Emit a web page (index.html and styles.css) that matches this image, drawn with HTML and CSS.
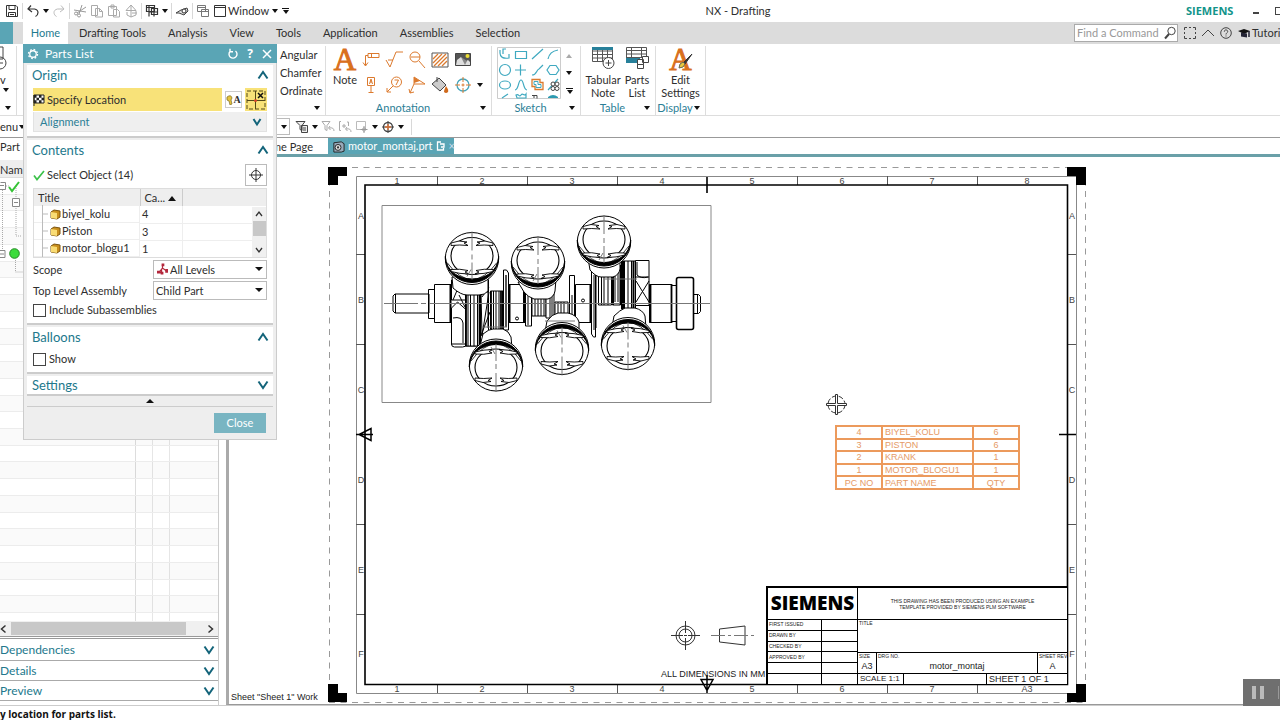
FILE: index.html
```html
<!DOCTYPE html>
<html lang="en">
<head>
<meta charset="utf-8">
<title>NX - Drafting</title>
<link rel="stylesheet" href="styles.css">
</head>
<body>
<div class="app">
  <header class="titlebar">
    <div class="quick">
      <button class="qa" aria-label="Save"><svg viewBox="0 0 14 14"><path d="M1.500 1.500h9.500l1.500 1.500v9.500h-11zM4 1.500v4h6v-4M3.500 12.500v-4h7v4M5 10.500h4" fill="none" stroke="#333"/></svg></button>
      <i class="vsep"></i>
      <button class="qa" aria-label="Undo"><svg viewBox="0 0 14 14"><path d="M5 1.500L2 5l4 3M2.500 5h6c5 1 4 6 1 7.500" fill="none" stroke="#333" stroke-width="1.200"/></svg></button>
      <i class="caret"></i>
      <button class="qa" aria-label="Redo"><svg viewBox="0 0 14 14"><path d="M9 1.500L12 5l-4 3M11.500 5h-6c-5 1-4 6-1 7.500" fill="none" stroke="#bbb"/></svg></button>
      <i class="vsep"></i>
      <button class="qa" aria-label="Cut"><svg viewBox="0 0 14 14"><path d="M13 3L4 9M9 1L6 10M1 6l12 2" fill="none" stroke="#999"/><circle cx="3" cy="9.500" r="1.500" fill="none" stroke="#999"/><circle cx="6" cy="11.500" r="1.500" fill="none" stroke="#999"/></svg></button>
      <button class="qa" aria-label="Copy"><svg viewBox="0 0 14 14"><path d="M1.500 1.500h6v10h-6zM5.500 4.500h4l3 3v5.500h-7zM9.500 4.500v3h3" fill="#fff" stroke="#aaa"/></svg></button>
      <button class="qa" aria-label="Paste"><svg viewBox="0 0 14 14"><path d="M1.500 2.500h8v9h-8zM4 1h3v3h-3zM6.500 5.500h4l2 2v5.500h-6z" fill="#fff" stroke="#aaa"/></svg></button>
      <button class="qa" aria-label="Repeat"><svg viewBox="0 0 14 14"><path d="M2 6.500L7 1l5 5.500H2M7 1v12M3 8v3l4 2 5-2V7M8 9h5" fill="none" stroke="#aaa"/></svg></button>
      <i class="vsep"></i>
      <button class="qa" aria-label="Touch mode"><svg viewBox="0 0 14 14"><path d="M1.500 1.500h8v6h-8zM1.500 3.500h8M4 1.500v11M6.500 4.500h6v6h-6zM9 4.500v8M4 8h8" fill="none" stroke="#333" stroke-width="1.200"/></svg></button>
      <i class="caret"></i>
      <i class="vsep"></i>
      <button class="qa" aria-label="Command finder"><svg viewBox="0 0 14 14"><path d="M1 9l5-3 6-2 1 3-4 4-5-2z" fill="#ddd" stroke="#444"/><circle cx="9" cy="7" r="2" fill="#fff" stroke="#333"/></svg></button>
      <i class="vsep"></i>
      <button class="qa" aria-label="Cascade"><svg viewBox="0 0 14 14"><path d="M1.500 1.500h8v6h-8zM1.500 3.500h8M5.500 5.500h7v7h-7zM5.500 7.500h7" fill="#fff" stroke="#777"/></svg></button>
      <button class="window-menu"><svg viewBox="0 0 14 14"><path d="M1.500 1.500h11v11h-11zM1.500 3.500h11" fill="#fff" stroke="#333"/></svg>Window <i class="caret"></i></button>
      <i class="caret barred"></i>
    </div>
    <h1 class="title">NX - Drafting</h1>
    <div class="winctl"><b class="brand">SIEMENS</b><button class="min" aria-label="Minimize"></button><button class="restore" aria-label="Restore"></button></div>
  </header>

  <nav class="tabs">
    <button class="filetab" aria-label="File"></button>
    <button class="tab active">Home</button>
    <button class="tab">Drafting Tools</button>
    <button class="tab">Analysis</button>
    <button class="tab">View</button>
    <button class="tab">Tools</button>
    <button class="tab">Application</button>
    <button class="tab">Assemblies</button>
    <button class="tab">Selection</button>
    <div class="tabs-right">
      <label class="find"><input type="text" placeholder="Find a Command" aria-label="Find a Command"><svg viewBox="0 0 14 14"><circle cx="8.500" cy="5" r="3.700" fill="none" stroke="#444"/><path d="M6 8L2 12.500" stroke="#444" stroke-width="2"/></svg></label>
      <button class="ti" aria-label="Full screen"><svg viewBox="0 0 14 14"><path d="M1.500 4V1.500H4M10 1.500h2.500V4M12.500 10v2.500H10M4 12.500H1.500V10M6 1.500h2M6 12.500h2M1.500 6v2M12.500 6v2" fill="none" stroke="#444"/></svg></button>
      <button class="ti" aria-label="Minimize ribbon"><svg viewBox="0 0 14 14"><path d="M1 10l6-6 6 6" fill="none" stroke="#444"/></svg></button>
      <button class="ti" aria-label="Help"><svg viewBox="0 0 14 14"><circle cx="7" cy="7" r="5.300" fill="none" stroke="#444"/><path d="M5.300 5.700c0-2.600 3.600-2.200 3.400 0C8.500 7 7 7 7 8.500M7 9.500v1" fill="none" stroke="#444"/></svg></button>
      <button class="tutorial"><svg viewBox="0 0 14 14"><path d="M1 5l6-2 6 2-6 3z" fill="#111"/><path d="M4 6.500v4l6 1v-4z" fill="#223"/><path d="M12 5v6" stroke="#223" stroke-width="1.500"/></svg>Tutorials</button>
    </div>
  </nav>

  <section class="ribbon">
    <div class="group g-view">
      <div class="gbody view-body"><svg class="half" viewBox="0 0 8 26"><path d="M0 1h3v12H0M0 11a4 4 0 0 1 0 12M0 17h3" fill="none" stroke="#444"/></svg><span>v</span><i class="caret"></i></div>
      <div class="glabel"><span></span><i class="caret"></i></div>
    </div>
    <div class="group g-dim">
      <div class="gbody dim-body"><button>Angular</button><button>Chamfer</button><button>Ordinate</button></div>
      <div class="glabel"><span></span><i class="caret"></i></div>
    </div>
    <div class="group g-ann">
      <div class="gbody ann-body">
        <button class="big"><span class="bigA">A</span>Note</button>
        <div class="anngrid">
          <button aria-label="Feature control frame"><svg viewBox="0 0 18 18"><path d="M6 2.500h11v4H6zM9.500 2.500v4M6 4.500H3.500v10M1 11.500l2.500 3.500L6 11.500" fill="none" stroke="#dc7a2e"/></svg></button>
          <button aria-label="Surface finish"><svg viewBox="0 0 18 18"><path d="M1 9l4 7 6-15h7M3 9h5" fill="none" stroke="#dc7a2e"/></svg></button>
          <button aria-label="Balloon zoom"><svg viewBox="0 0 18 18"><circle cx="7" cy="6" r="5" fill="none" stroke="#dc7a2e"/><path d="M3 6h9M11 10l6 7" fill="none" stroke="#dc7a2e"/></svg></button>
          <button aria-label="Crosshatch"><svg viewBox="0 0 18 18"><path d="M1 2h16v14H1z" fill="#fff" stroke="#555"/><path d="M2 8l5-5M2 12l9-9M3 15L15 3M7 15l9-9M11 15l5-5" stroke="#dc7a2e" stroke-width="1.300"/></svg></button>
          <button aria-label="Image"><svg viewBox="0 0 18 18"><path d="M1.500 2.500h15v12h-15z" fill="#555" stroke="#444"/><path d="M2 14l1-5 4-3 4 5 3-2 2 2v3z" fill="#ddd"/><path d="M7 6l4 8 2-4" fill="#888"/><circle cx="13.500" cy="5" r="2" fill="#eddf36"/></svg></button>
          <button aria-label="Datum feature"><svg viewBox="0 0 18 18"><path d="M5.500 1.500h7v8h-7zM9 9.500v7M6.500 16.500h5M7.500 8L9 3l1.500 5M8 6h2" fill="none" stroke="#dc7a2e"/></svg></button>
          <button aria-label="Balloon"><svg viewBox="0 0 18 18"><circle cx="11.500" cy="6" r="5" fill="none" stroke="#dc7a2e"/><path d="M8 10l-6 6M2 12v4h4M9.500 4h4L11 9" fill="none" stroke="#dc7a2e"/></svg></button>
          <button aria-label="Weld symbol"><svg viewBox="0 0 18 18"><path d="M6 1v7l-4 9M1 13l1 4 4-1M6 8h11M6 1l11 7" fill="none" stroke="#dc7a2e"/><path d="M6 1l6 4-6 2z" fill="#dc7a2e"/></svg></button>
          <button aria-label="Area fill"><svg viewBox="0 0 18 18"><path d="M8 2l7 7-6 6-8-7z" fill="#ccc" stroke="#444"/><path d="M6 6V1" stroke="#444"/><path d="M15 10q3 4 2 6-2 2-4 0 0-2 2-6" fill="#d06a1d"/></svg></button>
          <button aria-label="Center mark"><svg viewBox="0 0 18 18"><circle cx="9" cy="9" r="6" fill="none" stroke="#45a5bb" stroke-width="1.300"/><path d="M9 1v5M9 12v5M1 9h5M12 9h5M7.500 9h3M9 7.500v3" stroke="#dc7a2e"/></svg></button>
        </div>
        <i class="caret low"></i>
      </div>
      <div class="glabel"><span>Annotation</span><i class="caret"></i></div>
    </div>
    <div class="group g-sketch">
      <div class="gbody sk-body">
        <svg class="gallery" viewBox="0 0 64 52" role="img" aria-label="Sketch curves">
          <path d="M.5.500h63v51H.5z" fill="#fff" stroke="#ccc"/>
          <g fill="none" stroke="#3fa9c0" stroke-width="1.200">
            <path d="M3 3v3c0 4 3 6 9 5v-4M6 7V2h3M18.500 4.500h11v7h-11zM35 12L46 2M51 12c1-5 4-8 10-9"/>
            <circle cx="8" cy="23" r="5.500"/><path d="M18 23h11M23.500 17.500v11M35 28c5 0 4-5 7-6l4-4M53 18.500h6l3 4.500-3 4.500h-6l-3-4.500z"/>
            <ellipse cx="8" cy="38" rx="5.500" ry="4"/><path d="M18 43c4 0 3-10 6-10s2 10 6 10M51 43L61 32M5 51l6-4M19 48c3-2 3 3 5 0s3 2 5-1v4h-9z"/>
          </g>
          <path d="M35 32.500h8v3h3v7h-8v-3h-3z" fill="none" stroke="#dc7a2e" stroke-width="1.300"/><path d="M37 34.500h4v3h3v3h-5v-3h-2z" fill="none" stroke="#3fa9c0"/>
          <circle cx="56" cy="37" r="2" fill="#fff" stroke="#444"/><circle cx="60" cy="37" r="2" fill="#fff" stroke="#444"/><circle cx="56" cy="41.500" r="2" fill="#fff" stroke="#444"/><circle cx="60" cy="41.500" r="2" fill="#fff" stroke="#444"/>
          <path d="M35 48.500h5v3M37 48v3" fill="none" stroke="#444"/><path d="M51 50q5-4 10 0v1H51z" fill="#2c9ab0"/>
        </svg>
        <div class="spin"><i class="caret up dim"></i><i class="caret"></i><i class="caret barred"></i></div>
      </div>
      <div class="glabel"><span>Sketch</span><i class="caret"></i></div>
    </div>
    <div class="group g-table">
      <div class="gbody tb-body">
        <button class="big"><svg viewBox="0 0 24 24"><path d="M1.500 1.500h20v14h-20zM1.500 5h20M1.500 8.500h20M1.500 12h20M6.500 3v13M11.500 3v13M16.500 3v13" fill="#fff" stroke="#555"/><path d="M1 1h21v3H1z" fill="#27809a"/><circle cx="17.500" cy="17" r="5.500" fill="#fff" stroke="#444"/><path d="M17.500 14v6M14.500 17h6" stroke="#444"/></svg>Tabular Note</button>
        <button class="big"><svg viewBox="0 0 24 24"><path d="M1.500 1.500h20v15h-20zM1.500 4.500h20M1.500 8h20M1.500 11.500h20M6.500 1v11M16.500 1v11" fill="#fff" stroke="#555"/><path d="M1 12h14v5H1z" fill="#27809a"/><path d="M17.500 10.500h6v6h-6zM12.500 13.500h6v5h-6zM12.500 18.500h6v4h-6z" fill="#fff" stroke="#444"/></svg>Parts List</button>
      </div>
      <div class="glabel"><span>Table</span><i class="caret"></i></div>
    </div>
    <div class="group g-display">
      <div class="gbody ds-body">
        <button class="big"><span class="bigA">A<svg viewBox="0 0 24 24"><path d="M23 8L15 16l1 2z" fill="#333" stroke="#333"/><path d="M14 16q-4 1-4 6 5 0 6-4z" fill="#e7c93f" stroke="#665"/></svg></span>Edit Settings</button>
      </div>
      <div class="glabel"><span>Display</span><i class="caret"></i></div>
    </div>
  </section>

  <div class="selbar">
    <button class="menu">enu <i class="caret"></i></button>
    <div class="combo"><i class="caret"></i></div>
    <button class="si" aria-label="Selection filter"><svg viewBox="0 0 14 14"><path d="M1 1.500h9L7 5.500v5l-2-1v-4zM6.500 5.500h6v7h-6zM8 8h3M8 10h3" fill="#eee" stroke="#444"/></svg></button><i class="caret"></i>
    <button class="si" aria-label="Reset filter"><svg viewBox="0 0 14 14"><path d="M1 1.500h8L6 5.500v5l-2-1v-4zM13 11q0-4-5-3M9 6L7.500 8l2 2" fill="none" stroke="#aaa"/></svg></button>
    <button class="si" aria-label="Deselect"><svg viewBox="0 0 14 14"><path d="M3 1.500H1.500v9H3M4 6h4M6 4v4M9 2h1.500v4M13 12q0-4-5-3M9 7L7.500 9l2 2" fill="none" stroke="#aaa"/></svg></button>
    <button class="si" aria-label="Snap"><svg viewBox="0 0 14 14"><path d="M1.500 1.500h9v8h-9z" fill="none" stroke="#bbb"/><path d="M9 6v7M5.500 9.500h7M9 7.500l2 2-2 2-2-2z" fill="none" stroke="#999"/></svg></button><i class="caret"></i>
    <button class="si" aria-label="Snap point"><svg viewBox="0 0 14 14"><circle cx="7" cy="7" r="4.500" fill="none" stroke="#444" stroke-width="1.300"/><path d="M7 1v12M1 7h12" stroke="#444"/><path d="M7 4v6M4 7h6" stroke="#d86f34" stroke-width="1.300"/></svg></button><i class="caret"></i>
    <i class="vsep"></i>
  </div>

  <div class="docrow">
    <div class="navtitle">Part N</div>
    <button class="doc home">Welcome Page</button>
    <button class="doc current"><svg viewBox="0 0 14 14"><path d="M2 3l8-1 3 2v8l-3 1H2z" fill="#9ab" stroke="#222"/><circle cx="6.500" cy="8" r="3.200" fill="#ddd" stroke="#222"/><circle cx="6.500" cy="8" r="1.200" fill="#333"/></svg>motor_montaj.prt<svg class="mod" viewBox="0 0 10 10"><path d="M5 1H1.500v8h6V7M4 3h4v3H5" fill="none" stroke="#fff" stroke-width="1.300"/></svg><span class="x">×</span></button>
  </div>

  <main class="work">
    <aside class="nav">
      <div class="navhead">Nam</div>
      <div class="navrows">
        <svg class="tree" viewBox="0 0 24 96"><path d="M2.500 10v68M6 8h4M16 8v22M16 30v28h6M15.500 82v12h7" fill="none" stroke="#aaa" stroke-dasharray="1 1"/><path d="M.5 4.500h5v7H0M12.500 20.500h7v8h-7zM14 24.500h4M0 7.500h4M0 72.500h5v7H0M0 76h4" fill="#fff" stroke="#888"/><path d="M9 9l3 4 7-9" fill="none" stroke="#35c335" stroke-width="2"/><circle cx="14.500" cy="75.500" r="4.800" fill="#3ddc3d" stroke="#258a25"/></svg>
        <div class="r"></div><div class="r"></div><div class="r"></div><div class="r"></div><div class="r"></div><div class="r"></div><div class="r"></div><div class="r"></div><div class="r"></div><div class="r"></div><div class="r"></div><div class="r"></div><div class="r"></div><div class="r"></div><div class="r"></div><div class="r"></div><div class="r"></div><div class="r"></div><div class="r"></div><div class="r"></div><div class="r"></div><div class="r"></div><div class="r"></div><div class="r"></div><div class="r"></div><div class="r"></div><div class="r half-row"></div>
      </div>
      <div class="hscroll"><svg viewBox="0 0 8 10"><path d="M5.500 1.500L1.500 5l4 3.500" fill="none" stroke="#333" stroke-width="1.500"/></svg><i class="thumb"></i><svg viewBox="0 0 8 10"><path d="M2.500 1.500L6.500 5l-4 3.500" fill="none" stroke="#333" stroke-width="1.500"/></svg></div>
      <button class="fold">Dependencies<svg class="chev" viewBox="0 0 12 10"><path d="M1.500 1.500L6 8l4.500-6.500" /></svg></button>
      <button class="fold">Details<svg class="chev" viewBox="0 0 12 10"><path d="M1.500 1.500L6 8l4.500-6.500" /></svg></button>
      <button class="fold">Preview<svg class="chev" viewBox="0 0 12 10"><path d="M1.500 1.500L6 8l4.500-6.500" /></svg></button>
    </aside>

    <section class="canvas">
      <div class="sheetname">Sheet "Sheet 1" Work</div>
      <div class="sheet">
        <svg class="drawing" viewBox="328 157 760 547" role="img" aria-label="Crankshaft assembly drawing sheet">
          <defs>
            <g id="piston">
              <ellipse rx="26.700" ry="26" fill="#fff" stroke="#000"/>
              <path d="M-26.700-2A26.700 26 0 0 0 26.700-2C25 28-25 28-26.700-2z" fill="#000" stroke="#000"/>
              <path d="M-25 4Q0 38 25 4" fill="none" stroke="#000" stroke-width=".8"/>
              <ellipse cy="-2.500" rx="21" ry="18.500" fill="#fff" stroke="#000" stroke-width="1.100"/>
              <path d="M-21-15.500Q-13-19-5-16.500L-8-15.500-4-13Q-12-14-21-13zM21-15.500Q13-19 5-16.500L8-15.500 4-13Q12-14 21-13zM-21 11Q-12 10-4 12L-7 13.500-3 15.500Q-12 15.500-21 13zM21 11Q12 10 4 12L7 13.500 3 15.500Q12 15.500 21 13z" fill="#fff" stroke="#000" stroke-width=".9"/>
              <path d="M0-27v19M0-4v5M0 4v17M-5 18l4-7" stroke="#777" fill="none"/>
            </g>
          </defs>
          <g fill="none" stroke="#888"><path d="M329 167.500H1085M329 702.500H1085M329.500 168V702M1085.500 168V702" stroke="#999" stroke-dasharray="6 5.500"/>
            <path d="M356.500 176.500h720v517h-720z"/>
            <path d="M437.500 176v9M527.500 176v9M617.500 176v9M797.500 176v9M887.500 176v9M977.500 176v9M437.500 684v9M527.500 684v9M617.500 684v9M797.500 684v9M887.500 684v9M977.500 684v9M356 254.500h9M356 344.500h9M356 524.500h9M356 614.500h9M1067 254.500h9M1067 344.500h9M1067 524.500h9M1067 614.500h9" stroke="#555"/>
            <path d="M382 205.500h329v197h-329z"/></g>
          <path d="M328 167h19v9h-9v9h-10zM1086 167h-19v9h9v9h10zM328 702h19v-9h-9v-9h-10zM1086 702h-19v-9h9v-9h10z"/>
          <path d="M365 185h702.500v499.500H365zM707 177v16M1059 434.500h17" fill="none" stroke="#000" stroke-width="1.600"/>
          <path d="M356 434.500h17M371 428.500v12l-12-6zM707 675v18M701 679.500h12l-6 11z" fill="none" stroke="#000" stroke-width="1.500"/>
          <g class="zone"><text x="397" y="184">1</text><text x="482" y="184">2</text><text x="572" y="184">3</text><text x="662" y="184">4</text><text x="752" y="184">5</text><text x="842" y="184">6</text><text x="932" y="184">7</text><text x="1027" y="184">8</text>
            <text x="397" y="692">1</text><text x="482" y="692">2</text><text x="572" y="692">3</text><text x="662" y="692">4</text><text x="752" y="692">5</text><text x="842" y="692">6</text><text x="932" y="692">7</text><text x="1027" y="692">A3</text>
            <text x="361" y="219">A</text><text x="361" y="303">B</text><text x="361" y="393">C</text><text x="361" y="483">D</text><text x="361" y="573">E</text><text x="361" y="657">F</text>
            <text x="1072" y="219">A</text><text x="1072" y="303">B</text><text x="1072" y="393">C</text><text x="1072" y="483">D</text><text x="1072" y="573">E</text><text x="1072" y="657">F</text></g>

          <g fill="#fff" stroke="#000">
            <path d="M395 294h34v19h-34l-2-2v-15zM395.500 294v19M428.500 289.500h6v29h-6z"/>
            <path d="M434.500 284.500h16v38h-16z"/><path d="M450.500 284v39" stroke-width="2"/>
            <path d="M451.500 280h37v55l-9 11h-14v-46h-14z"/>
            <path d="M451.500 308l6-6 9 8v34q0 3-4 3h-8q-3 0-3-3zM453 318q9-2 10 5v20M451 344h14M453 300l5-12M459 295l6 12"/>
            <path d="M465.500 294h15v52h-15zM468 294v52M470.500 294v52M474 294v52M477.500 294v52" /><path d="M466 294v52M479.500 294v52" stroke-width="1.800"/>
            <path d="M481 292h8l-7 44zM488 284v44M482 297l7-10M480 338l10-26" />
            <path d="M490.500 291h15v40h-15zM493.500 291v40M496 291v40M499 291v40M502.500 291v40"/><path d="M491 291v40M501 291v40" stroke-width="1.800"/>
            <path d="M503.500 270h3l2 3v57h-5z"/><path d="M506 275v52" stroke="#555" stroke-width="2"/>
            <path d="M509.500 284.500h15v38h-15z"/><path d="M509.500 284v39M524 290v33" stroke-width="2"/><circle cx="517" cy="318.500" r="1.500"/>
            <path d="M525.500 280h6v46h-6zM528 285v40"/>
            <path d="M532 296h14v20h-14zM535 296v20M538 296v20M541 296v20M544 296v20"/>
            <path d="M546 288h8v30h-8zM550 288v32M552 288v32"/>
            <path d="M555 302h13v14h-13zM558 302v13M561 302v13M564 302v13"/>
            <path d="M569.500 275.500h5v50h-5zM572 295v30"/><path d="M575.500 284.500h15v38h-15z"/><path d="M590.500 284v39" stroke-width="2"/><circle cx="583" cy="300.500" r="1.500"/>
            <path d="M591.500 270h4v67h-2l-2-3zM594 275v55"/><path d="M596 272v56" />
            <path d="M598.500 275h13v30h-13zM601.500 277v28M604 277v28M608 277v28"/>
            <path d="M612.500 266h8v39h-8zM615 266v36M618 266v36"/><path d="M613 275v30M620.500 265v40" stroke-width="2"/>
            <path d="M621.500 261h14v48h-14zM624.500 261v48M628 261v48M631.500 261v48"/><path d="M623 261v48M633.500 261v48" stroke-width="2"/>
            <path d="M635.500 260.500h13.500v45h-13.500zM637 262v13q4 4 11 2M636 277h13M636 281l13 21M649 281l-13 21"/>
            <path d="M649.500 284.500h22v38h-22zM671.500 285.500h5v36h-5z"/><path d="M650.500 284v39M671.500 284v39" stroke-width="1.800"/>
            <path d="M693.500 294.500h5l2 2v15l-2 2h-5zM697.500 294v19"/>
            <rect x="676.500" y="277.500" width="17" height="52" rx="2" stroke-width="1.600"/>
            <path d="M452 277l1 11q8 7 14 7h12q6 0 9-4v-16zM518 282l6 10q4 5 10 7h14q6-2 7-8l1-12zM588 258l2 12q6 7 11 7h12q6-2 7-8v-12z"/>
            <path d="M480 346l3-12q6-5 10-5h10q6 2 8 8l1 11zM545 332l2-11q5-7 11-8h10q9 2 11 9v12zM612 327l2-11q6-6 11-8h10q8 2 10 8l1 12z"/>
          </g>
          <path d="M384 303.500h34M421 303.500h5M429 303.500h190M622 303.500h88M482 327h25M605 279h32M545 321h30" stroke="#777" fill="none"/>
          <use href="#piston" x="472" y="258.500"/><use href="#piston" x="538" y="263"/><use href="#piston" x="604" y="242"/>
          <use href="#piston" transform="translate(496 365) scale(1 -1)"/><use href="#piston" transform="translate(562 348.500) scale(1 -1)"/><use href="#piston" transform="translate(628 343.500) scale(1 -1)"/>

          <g fill="none" stroke="#333"><circle cx="685.500" cy="635.500" r="9.500"/><circle cx="685.500" cy="635.500" r="6.500"/><path d="M671 635.500h12M688 635.500h12M685.500 621v12M685.500 638v12M684 635.500h3M719.500 629v13l25.500 3v-19z"/><path d="M711 635.500h43" stroke="#777" stroke-dasharray="14 3 3 3"/></g>
          <text class="dims" x="661" y="677">ALL DIMENSIONS IN MM</text>
          <g fill="none" stroke="#333"><circle cx="836.500" cy="404.500" r="8.500" stroke-dasharray="5 2"/><path d="M835.500 394.500h2v9h9v2h-9v9h-2v-9h-9v-2h9z" fill="#fff"/></g>
        </svg>

        <table class="partslist">
          <tbody>
            <tr><td>4</td><td>BIYEL_KOLU</td><td>6</td></tr>
            <tr><td>3</td><td>PISTON</td><td>6</td></tr>
            <tr><td>2</td><td>KRANK</td><td>1</td></tr>
            <tr><td>1</td><td>MOTOR_BLOGU1</td><td>1</td></tr>
            <tr><th>PC NO</th><th>PART NAME</th><th>QTY</th></tr>
          </tbody>
        </table>

        <div class="titleblock">
          <div class="tb-left">
            <div class="logo">SIEMENS</div>
            <div class="sign"><span>FIRST ISSUED</span><span></span><span>DRAWN BY</span><span></span><span>CHECKED BY</span><span></span><span>APPROVED BY</span><span></span><span></span><span></span><span></span><span></span></div>
          </div>
          <div class="tb-right">
            <div class="notice">THIS DRAWING HAS BEEN PRODUCED USING AN EXAMPLE<br>TEMPLATE PROVIDED BY SIEMENS PLM SOFTWARE</div>
            <div class="tcell">TITLE</div>
            <div class="trow drg"><div><small>SIZE</small><p>A3</p></div><div><small>DRG NO.</small><p>motor_montaj</p></div><div><small>SHEET REV</small><p>A</p></div></div>
            <div class="trow scale"><div>SCALE 1:1</div><div></div><div>SHEET 1 OF 1</div></div>
          </div>
        </div>
      </div>
    </section>
  </main>

  <footer class="status">y location for parts list.</footer>

  <div class="recorder" aria-hidden="true"><i></i><i></i><b></b></div>

  <form class="dialog" aria-label="Parts List">
    <div class="dhead">
      <svg viewBox="0 0 14 14"><circle cx="7" cy="7" r="3.800" fill="none" stroke="#fff" stroke-width="1.500"/><circle cx="7" cy="7" r="5.300" fill="none" stroke="#fff" stroke-width="1.500" stroke-dasharray="2 2.160"/></svg>
      <h2>Parts List</h2>
      <button type="button" aria-label="Reset"><svg viewBox="0 0 12 12"><path d="M3 3.500a4 4 0 1 0 5.500-.5M3 .8v3h3" fill="none" stroke="#fff" stroke-width="1.400"/></svg></button>
      <button type="button" class="q" aria-label="Help">?</button>
      <button type="button" aria-label="Close dialog"><svg viewBox="0 0 12 12"><path d="M2 2l8 8M10 2l-8 8" stroke="#fff" stroke-width="1.500"/></svg></button>
    </div>
    <section class="sec origin">
      <h3>Origin<svg class="chev" viewBox="0 0 12 10"><path d="M1.500 8.500L6 2l4.500 6.500"/></svg></h3>
      <div class="specify">
        <button type="button" class="loc"><svg viewBox="0 0 12 12"><path d="M1 1h10v8H1z" fill="#fff" stroke="#222"/><path d="M1 1h2.500v2.700H1zM6 1h2.500v2.700H6zM3.500 3.700H6v2.600H3.500zM8.500 3.700H11v2.600H8.500zM1 6.300h2.500V9H1zM6 6.300h2.500V9H6z" fill="#222"/><path d="M1 1v11" stroke="#222"/></svg>Specify Location</button>
        <button type="button" class="tool a"><svg viewBox="0 0 7 10"><path d="M1 2q4-3 5 1l-1 2 1 4-2 1-1-4Q0 6 1 2" fill="#e5c33c" stroke="#7c6a22" stroke-width=".7"/></svg>A</button>
        <button type="button" class="tool on" aria-label="Origin tool"><svg viewBox="0 0 20 20"><path d="M1 1h18v18H1z" fill="none" stroke="#554a18" stroke-dasharray="4 2"/><path d="M9.500 1v18M1 10.500h18" stroke="#554a18"/><path d="M12 3l5 5M17 3l-5 5" stroke="#111" stroke-width="1.500"/><circle cx="9.500" cy="10.500" r="1.500" fill="#d6452a"/></svg></button>
      </div>
      <button type="button" class="align">Alignment<svg class="chev" viewBox="0 0 12 10"><path d="M2.500 2L6 7.500 9.500 2"/></svg></button>
    </section>
    <section class="sec contents">
      <h3>Contents<svg class="chev" viewBox="0 0 12 10"><path d="M1.500 8.500L6 2l4.500 6.500"/></svg></h3>
      <div class="selobj"><svg viewBox="0 0 12 12"><path d="M1 6.500l3 4L11 2" fill="none" stroke="#3cc24a" stroke-width="1.700"/></svg><span>Select Object (14)</span><button type="button" aria-label="Pick point"><svg viewBox="0 0 16 16"><circle cx="8" cy="8" r="4.500" fill="none" stroke="#333"/><path d="M8 1v14M1 8h14" stroke="#333"/></svg></button></div>
      <div class="list">
        <table>
          <thead><tr><th>Title</th><th>Ca... <i class="sort"></i></th><th></th></tr></thead>
          <tbody>
            <tr><td><svg viewBox="0 0 20 12"><path d="M.5-3v18M.5 6H6" stroke="#bbb" fill="none"/><path d="M9 4l3-2 6 1v6l-3 2-6-1z" fill="#c98f1c" stroke="#7b5410"/><path d="M9 4l6 1v6l-6-1z" fill="#f9dc74"/></svg>biyel_kolu</td><td>4</td><td></td></tr>
            <tr><td><svg viewBox="0 0 20 12"><path d="M.5-3v18M.5 6H6" stroke="#bbb" fill="none"/><path d="M9 4l3-2 6 1v6l-3 2-6-1z" fill="#c98f1c" stroke="#7b5410"/><path d="M9 4l6 1v6l-6-1z" fill="#f9dc74"/></svg>Piston</td><td>3</td><td></td></tr>
            <tr><td><svg viewBox="0 0 20 12"><path d="M.5-3v18M.5 6H6" stroke="#bbb" fill="none"/><path d="M9 4l3-2 6 1v6l-3 2-6-1z" fill="#c98f1c" stroke="#7b5410"/><path d="M9 4l6 1v6l-6-1z" fill="#f9dc74"/></svg>motor_blogu1</td><td>1</td><td></td></tr>
          </tbody>
        </table>
        <div class="vscroll"><svg viewBox="0 0 10 8"><path d="M2 6l3-4 3 4" fill="none" stroke="#333" stroke-width="1.300"/></svg><i></i><svg viewBox="0 0 10 8"><path d="M2 2l3 4 3-4" fill="none" stroke="#333" stroke-width="1.300"/></svg></div>
      </div>
      <div class="field"><label for="scope">Scope</label><div class="sel"><select id="scope" class="iconed"><option>All Levels</option></select><svg viewBox="0 0 12 12"><path d="M6 2v4M2 10l4-5 4 3M5 6v4" fill="none" stroke="#b3273c" stroke-width="1.300"/><path d="M5 0h3v3H5zM0 8h4v3H0zM4 9h3v3H4zM9 6h3v4H9z" fill="#b3273c"/></svg><i class="caret"></i></div></div>
      <div class="field"><label for="tla">Top Level Assembly</label><div class="sel"><select id="tla"><option>Child Part</option></select><i class="caret"></i></div></div>
      <label class="check"><input type="checkbox">Include Subassemblies</label>
    </section>
    <section class="sec balloons">
      <h3>Balloons<svg class="chev" viewBox="0 0 12 10"><path d="M1.500 8.500L6 2l4.500 6.500"/></svg></h3>
      <label class="check"><input type="checkbox">Show</label>
    </section>
    <section class="sec settings">
      <h3>Settings<svg class="chev" viewBox="0 0 12 10"><path d="M1.500 1.500L6 8l4.500-6.500"/></svg></h3>
    </section>
    <div class="collapse"><i class="caret up"></i></div>
    <div class="actions"><button type="button">Close</button></div>
  </form>
</div>
</body>
</html>
```
FILE: styles.css
```css
* { box-sizing: border-box; }
body { margin: 0; font: 11px/16px Lato, "Open Sans", sans-serif; color: #2e2e2e; background: #fff; overflow: hidden; }
button { font: inherit; color: inherit; background: none; border: 0; padding: 0; margin: 0; white-space: nowrap; }
h1, h2, h3, p { margin: 0; font: inherit; }
svg { display: block; flex: none; }
.app { position: relative; display: flex; flex-direction: column; height: 100vh; overflow: hidden; }

.caret { display: inline-block; flex: none; width: 0; height: 0; border: 3px solid transparent; border-top: 4px solid #111; border-bottom: 0; }
.caret.up { border-top: 0; border-bottom: 4px solid #111; }
.caret.dim { border-bottom-color: #aaa; }
.caret.barred { width: 7px; height: 6px; border: 0; background: linear-gradient(#111, #111) top / 7px 1px no-repeat, conic-gradient(from -45deg at 50% 100%, transparent 0) bottom / 7px 4px no-repeat; position: relative; }
.caret.barred::after { content: ""; display: block; width: 0; margin: 2px auto 0; border: 3px solid transparent; border-top: 4px solid #111; border-bottom: 0; }
.vsep { flex: none; width: 1px; height: 16px; background: #d8d8d8; }

/* title bar */
.titlebar { display: flex; align-items: center; height: 22px; flex: none; }
.quick { width: 290px; display: flex; align-items: center; gap: 3px; padding-left: 5px; }
.quick svg { width: 14px; height: 14px; }
.window-menu { display: flex; align-items: center; gap: 1px; }
.window-menu .caret { margin: 0 1px 0 2px; }
.title { flex: 1; text-align: center; }
.winctl { width: 94px; display: flex; align-items: center; gap: 20px; overflow: hidden; }
.brand { font: bold 11px/16px "Open Sans", sans-serif; color: #12948a; }
.min { width: 6px; height: 6px; border-bottom: 2px solid #444; flex: none; }
.restore { width: 8px; height: 8px; border: 1px solid #444; flex: none; margin-left: -4px; }

/* ribbon tabs */
.tabs { display: flex; height: 22px; flex: none; background: #dcdcdc; line-height: 22px; overflow: hidden; }
.filetab { width: 13px; background: #5aa5b5; margin-right: 10px; flex: none; }
.tab { padding: 0 11px; flex: none; }
.tab.active { background: #fff; color: #1e7b8f; width: 45px; padding: 0; }
.tabs-right { margin-left: auto; width: 206px; display: flex; align-items: center; gap: 4px; flex: none; }
.find { display: flex; align-items: center; width: 104px; height: 18px; background: #fff; border: 1px solid #aaa; margin-right: 1px; }
.find input { flex: 1; min-width: 0; border: 0; padding: 0 2px; font: inherit; line-height: 16px; outline: 0; }
.find input::placeholder { color: #999; }
.find svg, .ti svg, .tutorial svg { width: 14px; height: 14px; }
.tutorial { display: flex; align-items: center; gap: 1px; }

/* ribbon */
.ribbon { display: flex; height: 72px; flex: none; border-bottom: 1px solid #ddd; padding-top: 2px; }
.group { display: flex; flex-direction: column; border-right: 1px solid #ddd; flex: none; }
.gbody { flex: 1; display: flex; min-height: 0; }
.glabel { display: flex; align-items: center; justify-content: space-between; height: 14px; color: #2b7e96; padding-right: 5px; line-height: 14px; }
.glabel span { flex: 1; text-align: center; }
.g-view { width: 17px; }
.view-body { flex-direction: column; overflow: hidden; }
.half { width: 8px; height: 26px; }
.view-body .caret { margin-left: 3px; }
.g-dim { width: 309px; }
.dim-body { flex-direction: column; align-items: flex-start; padding-left: 263px; }
.dim-body button { line-height: 18px; }
.g-ann { width: 166px; }
.ann-body { padding-left: 6px; }
.big { display: flex; flex-direction: column; align-items: center; line-height: 13px; white-space: normal; width: 26px; }
.big > svg { width: 24px; height: 24px; margin: 0 0 3px; }
.bigA { position: relative; font: 31px/27px "Liberation Serif", serif; color: #d9701d; height: 27px; -webkit-text-stroke: 1px #d9701d; }
.bigA svg { position: absolute; left: 0; top: 0; width: 24px; height: 24px; }
.anngrid { display: grid; grid-template-columns: repeat(5, 23px); grid-template-rows: 25px 25px; margin-left: 1px; padding-top: 1px; }
.anngrid button { display: grid; place-items: center; }
.anngrid svg { width: 18px; height: 18px; }
.low { align-self: flex-end; margin: 0 0 14px 3px; }
.g-sketch { width: 89px; }
.sk-body { padding: 1px 0 0 5px; gap: 5px; }
.gallery { width: 64px; height: 52px; }
.spin { display: flex; flex-direction: column; justify-content: space-between; padding: 7px 0 5px; height: 52px; }
.g-table { width: 75px; }
.tb-body { padding-left: 5px; }
.tb-body .big { width: 34px; }
.g-display { width: 50px; }
.ds-body .big { width: 50px; padding: 0 5px; }

/* selection bar and document tabs */
.selbar { display: flex; align-items: center; gap: 3px; height: 22px; flex: none; border-bottom: 1px solid #999; }
.menu { display: flex; align-items: center; gap: 1px; width: 23px; flex: none; }
.combo { width: 264px; height: 17px; border: 1px solid #bbb; display: flex; align-items: center; justify-content: flex-end; padding-right: 2px; margin-right: 2px; }
.si svg { width: 14px; height: 14px; }
.selbar .vsep { margin-left: 4px; }
.docrow { display: flex; height: 19px; flex: none; line-height: 18px; }
.navtitle { width: 228px; }
.doc { border-bottom: 3px solid #6aa0a8; }
.docrow::after { content: ""; flex: 1; border-bottom: 3px solid #6aa0a8; }
.home { width: 101px; text-align: right; padding-right: 15px; border-right: 1px solid #5aa5b5; line-height: 17px; }
.current { display: flex; align-items: center; gap: 3px; width: 125px; padding-left: 3px; background: #5aa5b5; color: #fff; }
.current svg { width: 13px; height: 13px; }
.current .mod { width: 10px; height: 10px; }
.x { color: #cde; margin-left: auto; padding-right: 4px; }

/* part navigator */
.work { flex: 1; display: flex; min-height: 0; }
.nav { width: 219px; display: flex; flex-direction: column; flex: none; border-right: 1px solid #ccc; margin-top: 3px; }
.navhead { background: #eee; height: 18px; line-height: 20px; border-bottom: 1px solid #ddd; flex: none; }
.navrows { position: relative; flex: 1; display: flex; flex-direction: column; background: linear-gradient(#ddd, #ddd) 135px 0 / 1px 100% no-repeat, linear-gradient(#e6e6e6, #e6e6e6) 152px 0 / 1px 100% no-repeat, linear-gradient(#e6e6e6, #e6e6e6) 169px 0 / 1px 100% no-repeat; overflow: hidden; }
.r { flex: 1; border-bottom: 1px solid #ececec; }
.r:nth-child(odd) { background: rgba(0, 0, 0, .02); }
.half-row { flex: .5; border: 0; }
.tree { position: absolute; left: 0; top: 0; width: 24px; height: 96px; }
.hscroll { display: flex; align-items: center; height: 15px; background: #f0f0f0; flex: none; padding-right: 4px; }
.hscroll svg { width: 8px; height: 10px; }
.thumb { width: 175px; height: 13px; background: #c8c8c8; margin: 0 auto 0 3px; }
.fold { display: flex; align-items: center; justify-content: space-between; height: 20px; border-bottom: 1px solid #aaa; color: #22788c; font-size: 12px; padding-right: 3px; flex: none; }
.hscroll + .fold { border-top: 3px double #999; height: 25px; padding-top: 1px; }
.fold:last-child { margin-bottom: 4px; }
.chev { width: 12px; height: 10px; fill: none; stroke: #13647a; stroke-width: 2; }

/* drawing canvas */
.canvas { position: relative; flex: 1; margin-left: 7px; border-left: 3px solid #aaa; border-bottom: 1px solid #999; padding-left: 99px; overflow: hidden; }
.sheetname { position: absolute; left: 2px; bottom: 1px; font: 9px/12px "Liberation Sans", sans-serif; color: #222; }
.sheet { position: relative; width: 760px; }
.drawing { width: 760px; height: 547px; }
.zone { font: 9px "Liberation Sans", sans-serif; text-anchor: middle; fill: #444; }
.dims { font: 9px "Liberation Sans", sans-serif; fill: #222; }
.partslist { position: absolute; left: 507px; top: 268px; width: 185px; height: 65px; border-collapse: collapse; table-layout: fixed; font: 9px/10px "Liberation Sans", sans-serif; color: #e59a66; }
.partslist td, .partslist th { border: 2px solid #ec9a5c; padding: 0; text-align: center; font-weight: normal; height: 12px; }
.partslist td:nth-child(1), .partslist th:nth-child(1), .partslist td:nth-child(3), .partslist th:nth-child(3) { width: 46px; }
.partslist td:nth-child(2), .partslist th:nth-child(2) { text-align: left; padding-left: 2px; }
.titleblock { position: absolute; left: 438px; top: 429px; width: 302px; height: 99px; display: flex; border: 2px solid #000; border-width: 2px 1px 1px 2px; font: 9px/10px "Liberation Sans", sans-serif; color: #222; background: #fff; }
.tb-left { width: 90px; display: flex; flex-direction: column; border-right: 1px solid #000; }
.logo { height: 31px; flex: none; font: 800 19px/30px "Open Sans", sans-serif; text-align: center; color: #000; }
.sign { flex: 1; min-height: 0; display: grid; grid-template-columns: 53px 1fr; grid-template-rows: repeat(6, minmax(0, 1fr)); font-size: 5px; }
.sign span { border-top: 1px solid #000; padding-left: 1px; display: flex; align-items: center; line-height: 5px; }
.sign span:nth-child(even) { border-left: 1px solid #000; }
.tb-right { flex: 1; display: flex; flex-direction: column; }
.notice { height: 31px; display: grid; place-content: center; text-align: center; font-size: 5px; line-height: 6px; }
.tcell { flex: 1; border-top: 1px solid #000; font-size: 5px; line-height: 6px; padding-left: 1px; }
.trow { display: grid; border-top: 1px solid #000; }
.trow > div + div { border-left: 1px solid #000; }
.drg { grid-template-columns: 18px 1fr 30px; height: 21px; }
.drg small { display: block; font-size: 5px; line-height: 6px; padding-left: 1px; white-space: nowrap; }
.drg p { text-align: center; line-height: 15px; }
.scale { grid-template-columns: 45px 1fr 81px; height: 11px; white-space: nowrap; }
.scale div { padding-left: 2px; }
.scale div:first-child { font-size: 8px; }

.status { height: 15px; flex: none; font: bold 10px/17px "Open Sans", sans-serif; color: #111; border-top: 1px solid #ccc; }
.recorder { position: absolute; right: 0; bottom: 14px; width: 37px; height: 27px; background: #6f6f6f; display: flex; align-items: center; gap: 4px; padding-left: 9px; }
.recorder i { width: 4px; height: 13px; background: #bbb; }
.recorder b { width: 1px; height: 13px; background: #999; margin-left: 10px; }

/* parts list dialog */
.dialog { position: absolute; left: 23px; top: 44px; width: 254px; background: #eee; border: 1px solid #ccc; border-top: 0; display: flex; flex-direction: column; }
.dhead { height: 19px; background: #5aa5b5; color: #fff; display: flex; align-items: center; gap: 5px; padding: 0 4px; font-size: 12px; margin: 0 -1px; }
.dhead h2 { flex: 1; }
.dhead svg { width: 12px; height: 12px; }
.dhead > svg { margin-right: 1px; }
.dhead button { width: 12px; display: grid; place-items: center; }
.dhead .q { font: bold 12px/16px "Open Sans", sans-serif; }
.sec { background: #fff; margin: 2px 3px 0; padding: 0 6px; border-bottom: 2px solid #ccc; }
.sec h3 { display: flex; justify-content: space-between; align-items: center; height: 20px; color: #22788c; font-size: 13px; margin: 0 -2px 0 -1px; }
.origin { height: 73px; }
.specify { display: flex; gap: 3px; height: 23px; margin-top: 3px; }
.loc { flex: 1; display: flex; align-items: center; gap: 2px; background: #f8e279; }
.loc svg { width: 12px; height: 12px; }
.tool { display: flex; align-items: center; justify-content: center; border: 1px solid #ccc; width: 17px; height: 17px; align-self: center; font: bold 10px/14px "Liberation Serif", serif; }
.tool.a svg { width: 7px; height: 10px; }
.tool.on { width: 22px; height: 23px; background: #f8e279; border: 0; }
.tool.on svg { width: 20px; height: 20px; }
.align { display: flex; align-items: center; justify-content: space-between; width: 100%; height: 20px; margin-top: 1px; background: #efefef; border: 1px solid #e2e2e2; border-top: 0; color: #2b7e96; padding: 0 3px 0 6px; }
.contents { height: 185px; }
.selobj { display: flex; align-items: center; gap: 2px; height: 22px; margin: 4px 0 2px; }
.selobj span { flex: 1; }
.selobj > svg { width: 12px; height: 12px; }
.selobj button { width: 22px; height: 22px; border: 1px solid #bbb; display: grid; place-items: center; }
.selobj button svg { width: 16px; height: 16px; }
.list { position: relative; height: 70px; border: 1px solid #ddd; overflow: hidden; }
.list table { width: 100%; border-collapse: collapse; table-layout: fixed; }
.list th { height: 17px; background: #eee; text-align: left; font-weight: normal; padding: 0 0 0 4px; border-right: 1px solid #ccc; line-height: 17px; }
.list td { height: 17px; padding: 0 0 0 2px; border-right: 1px solid #eee; border-bottom: 1px solid #eee; line-height: 16px; }
.list th:nth-child(1) { width: 106px; }
.list th:nth-child(2) { width: 42px; }
.list td:first-child { display: flex; align-items: center; padding-left: 8px; }
.list td svg { width: 20px; height: 12px; overflow: visible; }
.list th:last-child, .list td:last-child { border-right: 0; }
.sort { display: inline-block; border: 4px solid transparent; border-bottom: 5px solid #111; border-top: 0; margin-bottom: 1px; }
.vscroll { position: absolute; right: 0; top: 18px; bottom: 0; width: 14px; background: #f0f0f0; display: flex; flex-direction: column; align-items: center; padding: 3px 0; gap: 3px; }
.vscroll svg { width: 10px; height: 8px; }
.vscroll i { width: 13px; height: 15px; background: #c8c8c8; margin-bottom: auto; }
.field { display: flex; justify-content: space-between; align-items: center; height: 21px; }
.list + .field { margin-top: 1px; }
.sel { position: relative; width: 114px; height: 19px; }
.sel select { appearance: none; width: 100%; height: 100%; border: 1px solid #bbb; border-radius: 0; background: #fff; font: inherit; color: inherit; padding: 0 2px; }
.sel select.iconed { padding-left: 16px; }
.sel svg { position: absolute; left: 4px; top: 3px; width: 11px; height: 12px; }
.sel .caret { position: absolute; right: 4px; top: 7px; border-left-width: 4px; border-right-width: 4px; }
.check { display: flex; align-items: center; gap: 3px; height: 18px; }
.check input { appearance: none; width: 13px; height: 13px; border: 1px solid #444; margin: 0; background: #fff; }
.balloons { height: 47px; }
.balloons .check { margin-top: 3px; }
.settings { height: 20px; }
.settings h3 { height: 18px; }
.collapse { height: 11px; margin: 0 3px; border-bottom: 1px solid #ccc; display: grid; place-items: center; }
.collapse .caret { border-left-width: 4px; border-right-width: 4px; }
.actions { display: flex; justify-content: flex-end; padding: 6px 10px 6px; }
.actions button { width: 52px; height: 20px; background: #79b5c2; color: #fff; }
```
